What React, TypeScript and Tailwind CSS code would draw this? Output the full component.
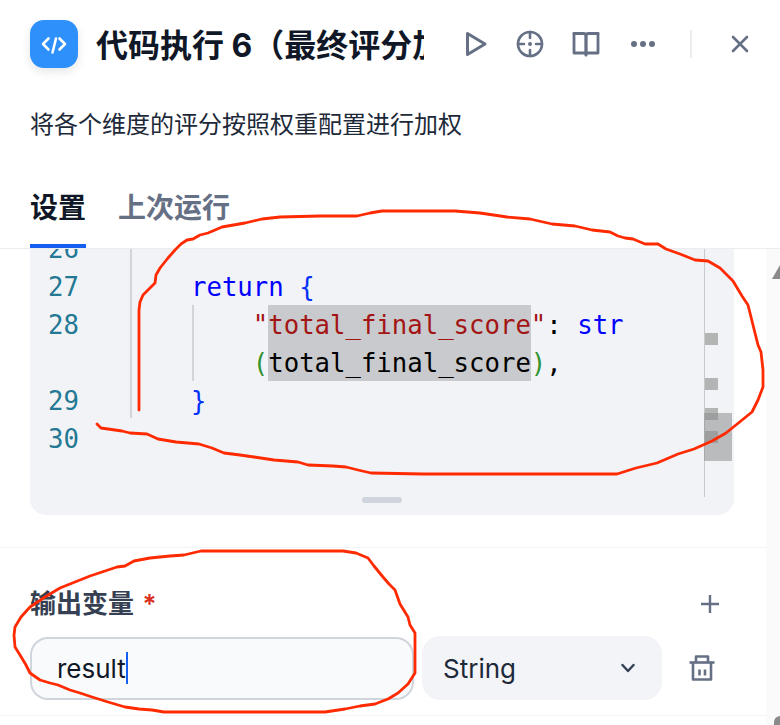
import React from "react";

const sans = "font-['Inter','Noto_Sans_CJK_SC',sans-serif]";
const ink = "#667085";

function Row({ n, children }: { n?: number; children?: React.ReactNode }) {
  return (
    <div className="flex h-[38px] leading-[40px] whitespace-pre">
      <div className="w-[49px] text-right text-[#237893]">{n ?? ""}</div>
      <div className="ml-[112px]">{children}</div>
    </div>
  );
}

function Mark({ cls }: { cls: string }) {
  return <div className={`w-[13px] h-[12px] bg-[#a8a8a8]/85 ${cls}`} />;
}

const loopOne =
  "M139 410 L139 310 L140 302 L143 295 L149 289 L155 283 L156 275 L160 268 L168 258 L175 250 L181 244 L187 240 L193 239 L200 235 L208 233 L222 227 L245 223 L262 219 L280 217 L320 216 L357 216 L370 213 L382 211 L420 211 L455 211 L480 213 L507 217 L530 219 L552 224 L575 226 L592 230 L610 232 L618 236 L625 238 L633 239 L645 244 L658 244 L666 249 L680 254 L695 260 L708 261 L720 268 L733 281 L742 296 L748 305 L758 345 L761 352 L763 370 L763 387 L758 400 L752 412 L726 433 L712 441 L694 449 L678 454 L657 463 L636 468 L617 474 L520 474 L423 474 L371 473 L358 470 L346 467 L333 466 L308 465 L298 462 L274 460 L254 457 L240 455 L224 453 L212 448 L199 444 L176 442 L158 439 L147 434 L130 433 L122 431 L108 429 L101 428 L97 424";

const loopTwo =
  "M201 551 L270 551 L343 551 L356 553 L368 558 L374 566 L383 577 L389 584 L395 590 L400 604 L408 617 L410 625 L415 633 L415 655 L415 673 L408 684 L398 693 L388 699 L375 704 L360 706 L345 709 L325 712 L245 712 L164 712 L152 710 L139 709 L125 707 L108 702 L92 697 L80 693 L70 690 L58 685 L50 683 L40 680 L30 673 L26 665 L20 655 L15 647 L14 635 L15 627 L21 617 L30 607 L45 597 L60 588 L75 582 L90 576 L105 571 L117 567 L125 566 L134 561 L150 558 L170 556 L184 555 Z";

export default function App() {
  return (
    <div className={`relative w-[780px] h-[725px] overflow-hidden bg-white ${sans}`}>
      <header className="flex items-start pt-5 pl-[30px] h-[68px]">
        <div className="w-12 h-12 rounded-[14px] bg-[#2e90fa] shadow-[0_4px_10px_rgba(16,24,40,0.10)] flex items-center justify-center">
          <svg width="28" height="28" viewBox="0 0 28 28" fill="none" stroke="#fff" strokeWidth="2.6" strokeLinecap="round" strokeLinejoin="round">
            <path d="M8.5 8.5 3 14 8.5 19.5" />
            <path d="M19.5 8.5 25 14 19.5 19.5" />
            <path d="M16 8.5 12.5 22.5" />
          </svg>
        </div>
        <div className="ml-[18px] w-[328px] h-12 overflow-hidden whitespace-nowrap text-[32px] leading-[52px] font-bold text-[#101828]">
          代码执行 6（最终评分加权）
        </div>
        <div className="ml-[42px] mt-[10px] flex items-center">
          <svg width="24" height="28" viewBox="0 0 24 28" fill="none" stroke={ink} strokeWidth="3" strokeLinejoin="round">
            <path d="M1.5 3.5 V24.5 L19 14 Z" />
          </svg>
          <svg className="ml-[26px]" width="28" height="28" viewBox="0 0 28 28" fill="none" stroke={ink} strokeWidth="2.6" strokeLinecap="round">
            <circle cx="14" cy="14" r="12" />
            <path d="M14 2v6M14 20v6M2 14h6M20 14h6" />
            <circle cx="14" cy="14" r="2" fill={ink} stroke="none" />
          </svg>
          <svg className="ml-[28px]" width="28" height="28" viewBox="0 0 28 28" fill="none" stroke={ink} strokeWidth="2.8" strokeLinejoin="round" strokeLinecap="round">
            <path d="M2 3.5h9.5a2.5 2.5 0 0 1 2.5 2.5v19" />
            <path d="M26 3.5h-9.5A2.5 2.5 0 0 0 14 6v19" />
            <path d="M2 3.5V23h24V3.5" />
          </svg>
          <svg className="ml-[30px]" width="26" height="8" viewBox="0 0 26 8" fill={ink}>
            <circle cx="4" cy="4" r="3" />
            <circle cx="13" cy="4" r="3" />
            <circle cx="22" cy="4" r="3" />
          </svg>
          <div className="ml-[34px] w-[1.5px] h-7 bg-[#eaecf0]" />
          <svg className="ml-[38px]" width="20" height="20" viewBox="0 0 20 20" fill="none" stroke={ink} strokeWidth="2.6" strokeLinecap="round">
            <path d="M3 3l14 14M17 3 3 17" />
          </svg>
        </div>
      </header>

      <p className="mt-[39px] pl-[30px] text-[24px] leading-[36px] text-[#1d2939]">将各个维度的评分按照权重配置进行加权</p>

      <nav className="mt-[47px] h-[59px] border-b border-[#eaecf0] pl-[30px] flex gap-[32px] text-[28px] leading-[36px] font-semibold">
        <div className="h-[58px] border-b-4 border-[#155eef] text-[#101828]">设置</div>
        <div className="text-[#667085]">上次运行</div>
      </nav>

      <div className="flex h-[476px]">
        <main className="w-[766px] shrink-0">
          <div className="px-[30px] pr-[32px]">
            <section className="relative h-[266px] overflow-hidden rounded-b-2xl bg-[#f2f3f7] font-['DejaVu_Sans_Mono',monospace] text-[25.66px] text-black">
              <div className="mt-[-20px]">
                <Row n={26} />
                <Row n={27}>
                  <span className="text-[#0000ff]">return</span> <span className="text-[#0431fa]">{"{"}</span>
                </Row>
                <Row n={28}>
                  {"    "}
                  <span className="text-[#a31515]">"<span className="inline-block h-[38px] bg-[#c9cacd]">total_final_score</span>"</span>
                  : <span className="text-[#0000ff]">str</span>
                </Row>
                <Row>
                  {"    "}
                  <span className="text-[#319331]">(</span>
                  <span className="inline-block h-[38px] bg-[#c9cacd]">total_final_score</span>
                  <span className="text-[#319331]">)</span>,
                </Row>
                <Row n={29}>
                  <span className="text-[#0431fa]">{"}"}</span>
                </Row>
                <Row n={30} />
              </div>
              <div className="absolute left-[100px] top-0 h-[169px] w-[2px] bg-[#d3d4d8]" />
              <div className="absolute left-[162px] top-[56px] h-[76px] w-[2px] bg-[#d3d4d8]" />
              <div className="absolute left-[674px] top-0 h-[248px] w-px bg-[#c8c9cd]" />
              <div className="absolute left-[675px] top-[84px]">
                <Mark cls="" />
                <Mark cls="mt-[33px]" />
                <Mark cls="mt-[18px]" />
                <Mark cls="mt-[11px]" />
              </div>
              <div className="absolute left-[674px] top-[164px] h-[48px] w-[28px] bg-[#8c8c8c]/55" />
              <div className="absolute left-[332px] top-[248px] h-[6px] w-[40px] rounded-full bg-[#d0d5dd]" />
            </section>
          </div>

          <div className="mt-[32px] h-[169px] border-y border-[#f2f4f7] px-[30px] pr-[32px]">
            <div className="mt-[38px] flex h-[36px] items-center justify-between">
              <div className="text-[26px] font-semibold leading-[36px] text-[#354052]">
                输出变量 <span className="ml-[2px] text-[#d92d20]">*</span>
              </div>
              <svg className="mr-[15px]" width="18" height="18" viewBox="0 0 18 18" fill="none" stroke={ink} strokeWidth="2.4">
                <path d="M9 0v18M0 9h18" />
              </svg>
            </div>
            <div className="mt-[14px] flex items-center">
              <div className="flex h-[63px] w-[384px] items-center rounded-[18px] border-2 border-[#d0d5dd] bg-[#f9fafb] pl-[25px] text-[26px] text-[#101828]">
                result
                <div className="h-[32px] w-[2px] bg-[#155eef]" />
              </div>
              <div className="ml-[8px] flex h-[64px] w-[240px] items-center justify-between rounded-[18px] bg-[#f2f4f7] pl-[21px] pr-[27px] text-[26px] text-[#1d2939]">
                String
                <svg width="14" height="10" viewBox="0 0 14 10" fill="none" stroke="#344054" strokeWidth="2.4" strokeLinecap="round" strokeLinejoin="round">
                  <path d="M1.5 2 7 8l5.5-6" />
                </svg>
              </div>
              <svg className="ml-[27px]" width="26" height="26" viewBox="0 0 26 26" fill="none" stroke={ink} strokeWidth="2.6" strokeLinejoin="round">
                <path d="M0.5 7.5h25" />
                <path d="M7 7V1.5h12V7" />
                <path d="M4 7.5V24.5h18V7.5" />
                <path d="M10.5 14.5v6M16 14.5v6" />
              </svg>
            </div>
          </div>
        </main>

        <aside className="flex w-[14px] flex-col justify-between bg-[#fafafa]">
          <svg className="mt-[16px]" width="14" height="15" viewBox="0 0 14 15" fill="#8a8a8a">
            <path d="M6 14 14 0V14Z" />
          </svg>
          <div className="ml-[8px] h-[9px] w-[6px] rounded-tl-full bg-[#8a8a8a]" />
        </aside>
      </div>

      <svg className="pointer-events-none absolute left-0 top-0" width="780" height="725" viewBox="0 0 780 725" fill="none" stroke="#ff2a00" strokeWidth="2.8" strokeLinejoin="round" strokeLinecap="round">
        <path d={loopOne} />
        <path d={loopTwo} />
      </svg>
    </div>
  );
}
